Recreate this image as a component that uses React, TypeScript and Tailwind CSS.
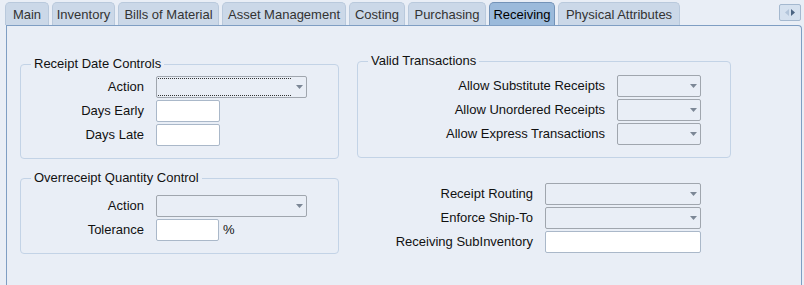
import React from 'react';

const tabs = [
  { label: 'Main', w: 'w-[44px]' },
  { label: 'Inventory', w: 'w-[63px]' },
  { label: 'Bills of Material', w: 'w-[101px]' },
  { label: 'Asset Management', w: 'w-[124px]' },
  { label: 'Costing', w: 'w-[56px]' },
  { label: 'Purchasing', w: 'w-[78px]' },
  { label: 'Receiving', w: 'w-[66px]', active: true },
  { label: 'Physical Attributes', w: 'w-[122px]' },
];

const Arrow = () => (
  <svg width="7" height="4" viewBox="0 0 7 4" className="shrink-0">
    <path d="M0 0H7L3.5 4Z" fill="#7c8796" />
  </svg>
);

const Select = ({ w, focused }: { w: string; focused?: boolean }) => (
  <div className={`${w} relative h-[22px] border border-[#a0a6ae] rounded-[2px] bg-[#e9eef6] flex items-center justify-end pr-[3px]`}>
    {focused && (
      <div className="absolute top-[1px] bottom-[1px] left-[1px] right-[15px] border-y border-dotted border-[#333]" />
    )}
    <Arrow />
  </div>
);

const Input = ({ w }: { w: string }) => (
  <div className={`${w} h-[22px] border border-[#aab8c9] rounded-[2px] bg-white`} />
);

const Row = ({ label, lw, children }: { label: string; lw: string; children: React.ReactNode }) => (
  <div className="flex items-center h-[22px] gap-[12px]">
    <span className={`${lw} text-right whitespace-nowrap`}>{label}</span>
    {children}
  </div>
);

const Group = ({ title, className, children }: { title: string; className: string; children: React.ReactNode }) => (
  <fieldset className={`border border-[#c3d3e6] rounded-[4px] flex flex-col gap-[2px] ${className}`}>
    <legend className="ml-[10px] px-[3px] leading-[14px] text-[#111]">{title}</legend>
    {children}
  </fieldset>
);

export default function App() {
  return (
    <div className="w-[804px] h-[285px] overflow-hidden bg-[#e9eef6] text-[13px] text-[#111] font-['Liberation_Sans',Arial,sans-serif]">
      <div className="flex items-end h-[25px] pl-[5px] pr-[3px]">
        <div className="flex items-end gap-[3px]">
          {tabs.map((t) => (
            <div
              key={t.label}
              className={`${t.w} h-[23px] rounded-t-[5px] border border-b-0 flex items-center justify-center pt-[2px] whitespace-nowrap ${
                t.active
                  ? 'bg-[#9bbadb] border-[#7393b8] text-black'
                  : 'bg-[#cbd8e8] border-[#b9c9dc] text-[#333]'
              }`}
            >
              {t.label}
            </div>
          ))}
        </div>
        <div className="ml-auto self-start mt-[4px] w-[22px] h-[17px] border border-[#a4b8cf] rounded-[2px] bg-[#d5e1ef] flex items-center justify-center gap-[2px]">
          <svg width="4" height="7" viewBox="0 0 4 7">
            <path d="M4 0V7L0 3.5Z" fill="#b3c5da" />
          </svg>
          <svg width="4" height="7" viewBox="0 0 4 7">
            <path d="M0 0V7L4 3.5Z" fill="#4b6482" />
          </svg>
        </div>
      </div>

      <div className="ml-[6px] mr-[2px] h-[260px] border border-b-0 border-[#7f9ec3] rounded-tr-[4px] bg-[#e9eef6] flex pl-[13px]">
        <div className="w-[319px] pt-[31px] flex flex-col">
          <Group title="Receipt Date Controls" className="pt-[5px] pb-[12px]">
            <Row label="Action" lw="w-[123px]">
              <Select w="w-[151px]" focused />
            </Row>
            <Row label="Days Early" lw="w-[123px]">
              <Input w="w-[64px]" />
            </Row>
            <Row label="Days Late" lw="w-[123px]">
              <Input w="w-[64px]" />
            </Row>
          </Group>
          <Group title="Overreceipt Quantity Control" className="mt-[12px] pt-[10px] pb-[12px]">
            <Row label="Action" lw="w-[123px]">
              <Select w="w-[151px]" />
            </Row>
            <Row label="Tolerance" lw="w-[123px]">
              <div className="flex items-center gap-[4px]">
                <Input w="w-[63px]" />
                <span>%</span>
              </div>
            </Row>
          </Group>
        </div>

        <div className="w-[374px] ml-[18px] pt-[28px] flex flex-col">
          <Group title="Valid Transactions" className="pt-[7px] pb-[12px]">
            <Row label="Allow Substitute Receipts" lw="w-[247px]">
              <Select w="w-[84px]" />
            </Row>
            <Row label="Allow Unordered Receipts" lw="w-[247px]">
              <Select w="w-[84px]" />
            </Row>
            <Row label="Allow Express Transactions" lw="w-[247px]">
              <Select w="w-[84px]" />
            </Row>
          </Group>
          <div className="mt-[25px] flex flex-col gap-[2px]">
            <Row label="Receipt Routing" lw="w-[176px]">
              <Select w="w-[156px]" />
            </Row>
            <Row label="Enforce Ship-To" lw="w-[176px]">
              <Select w="w-[156px]" />
            </Row>
            <Row label="Receiving SubInventory" lw="w-[176px]">
              <Input w="w-[156px]" />
            </Row>
          </div>
        </div>
      </div>
    </div>
  );
}
